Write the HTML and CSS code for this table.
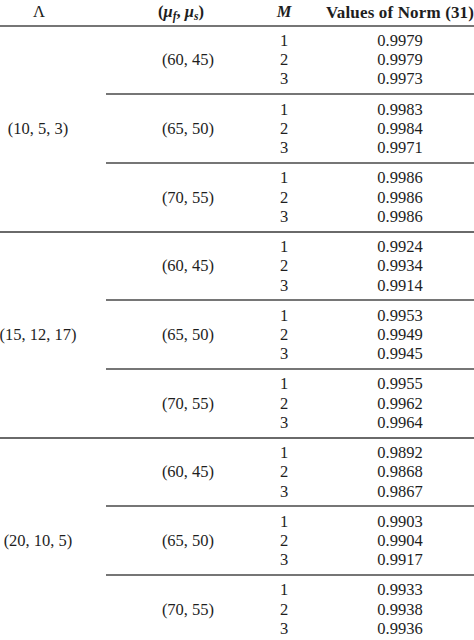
FILE: index.html
```html
<!DOCTYPE html>
<html>
<head>
<meta charset="utf-8">
<link rel="stylesheet" href="styles.css">
</head>
<body>
<div class="table">
  <div class="head">
    <div class="c1">Λ</div>
    <div class="c2">(<i>μ<sub>f</sub></i>, <i>μ<sub>s</sub></i>)</div>
    <div class="c3"><i>M</i></div>
    <div class="c4">Values of Norm (31)</div>
  </div>

  <div class="group">
    <div class="glabel"><span>(10, 5, 3)</span></div>
    <div class="subs">
      <div class="sub">
        <div class="slabel">(60, 45)</div>
        <div class="m">1</div><div class="v">0.9979</div>
        <div class="m">2</div><div class="v">0.9979</div>
        <div class="m">3</div><div class="v">0.9973</div>
      </div>
      <div class="sub">
        <div class="slabel">(65, 50)</div>
        <div class="m">1</div><div class="v">0.9983</div>
        <div class="m">2</div><div class="v">0.9984</div>
        <div class="m">3</div><div class="v">0.9971</div>
      </div>
      <div class="sub">
        <div class="slabel">(70, 55)</div>
        <div class="m">1</div><div class="v">0.9986</div>
        <div class="m">2</div><div class="v">0.9986</div>
        <div class="m">3</div><div class="v">0.9986</div>
      </div>
    </div>
  </div>

  <div class="group">
    <div class="glabel"><span>(15, 12, 17)</span></div>
    <div class="subs">
      <div class="sub">
        <div class="slabel">(60, 45)</div>
        <div class="m">1</div><div class="v">0.9924</div>
        <div class="m">2</div><div class="v">0.9934</div>
        <div class="m">3</div><div class="v">0.9914</div>
      </div>
      <div class="sub">
        <div class="slabel">(65, 50)</div>
        <div class="m">1</div><div class="v">0.9953</div>
        <div class="m">2</div><div class="v">0.9949</div>
        <div class="m">3</div><div class="v">0.9945</div>
      </div>
      <div class="sub">
        <div class="slabel">(70, 55)</div>
        <div class="m">1</div><div class="v">0.9955</div>
        <div class="m">2</div><div class="v">0.9962</div>
        <div class="m">3</div><div class="v">0.9964</div>
      </div>
    </div>
  </div>

  <div class="group">
    <div class="glabel"><span>(20, 10, 5)</span></div>
    <div class="subs">
      <div class="sub">
        <div class="slabel">(60, 45)</div>
        <div class="m">1</div><div class="v">0.9892</div>
        <div class="m">2</div><div class="v">0.9868</div>
        <div class="m">3</div><div class="v">0.9867</div>
      </div>
      <div class="sub">
        <div class="slabel">(65, 50)</div>
        <div class="m">1</div><div class="v">0.9903</div>
        <div class="m">2</div><div class="v">0.9904</div>
        <div class="m">3</div><div class="v">0.9917</div>
      </div>
      <div class="sub">
        <div class="slabel">(70, 55)</div>
        <div class="m">1</div><div class="v">0.9933</div>
        <div class="m">2</div><div class="v">0.9938</div>
        <div class="m">3</div><div class="v">0.9936</div>
      </div>
    </div>
  </div>
</div>
</body>
</html>
```

FILE: styles.css
```css
html, body {
  margin: 0;
  padding: 0;
  background: #ffffff;
  overflow: hidden;
}

.table {
  width: 502px;
  font-family: "Liberation Serif", "Times New Roman", serif;
  font-size: 16.5px;
  color: #1e1e1e;
}

.head {
  display: grid;
  grid-template-columns: 106px 164px 28px 204px;
  height: 24.5px;
  align-items: center;
  font-weight: bold;
  border-bottom: 2px solid #767676;
  line-height: 1;
  white-space: nowrap;
}

.head > div {
  text-align: center;
}

.head .c1 {
  padding-right: 28px;
  font-weight: normal;
}

.head .c2 {
  padding-right: 14px;
}

.head .c4 {
  font-size: 17px;
  letter-spacing: 0.15px;
}

.head sub {
  font-size: 0.7em;
  vertical-align: -0.3em;
  line-height: 0;
}

.group {
  display: grid;
  grid-template-columns: 106px 1fr;
}

.group + .group {
  border-top: 2px solid #6a6a6a;
}

.glabel {
  display: flex;
  align-items: center;
  justify-content: center;
  width: 76px;
  white-space: nowrap;
}

.sub {
  display: grid;
  grid-template-columns: 164px 28px 1fr;
  grid-template-rows: repeat(3, 19.3px);
  align-items: center;
  padding: 4.4px 0;
  line-height: 19.3px;
  white-space: nowrap;
}

.sub + .sub {
  border-top: 2px solid #767676;
}

.slabel {
  grid-column: 1;
  grid-row: 1 / span 3;
  align-self: center;
  text-align: center;
}

.m {
  grid-column: 2;
  text-align: center;
}

.v {
  grid-column: 3;
  text-align: center;
}
```
